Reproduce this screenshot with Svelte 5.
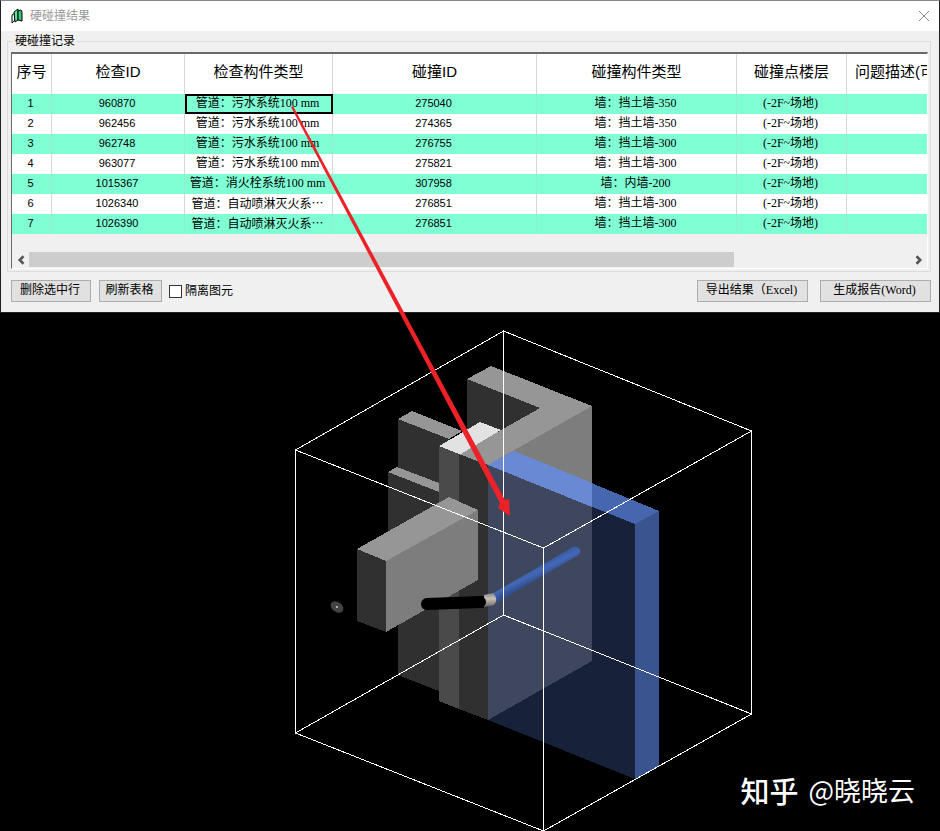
<script lang="ts">
  interface Clash {
    checkId: string;
    checkType: string;
    clashId: string;
    clashType: string;
    floor: string;
  }

  const columns = [
    { title: '序号', width: 40 },
    { title: '检查ID', width: 133 },
    { title: '检查构件类型', width: 148 },
    { title: '碰撞ID', width: 204 },
    { title: '碰撞构件类型', width: 200 },
    { title: '碰撞点楼层', width: 110 },
    { title: '问题描述(可', width: 311 },
  ];

  const clashes: Clash[] = [
    { checkId: '960870', checkType: '管道：污水系统100 mm', clashId: '275040', clashType: '墙：挡土墙-350', floor: '(-2F~场地)' },
    { checkId: '962456', checkType: '管道：污水系统100 mm', clashId: '274365', clashType: '墙：挡土墙-350', floor: '(-2F~场地)' },
    { checkId: '962748', checkType: '管道：污水系统100 mm', clashId: '276755', clashType: '墙：挡土墙-300', floor: '(-2F~场地)' },
    { checkId: '963077', checkType: '管道：污水系统100 mm', clashId: '275821', clashType: '墙：挡土墙-300', floor: '(-2F~场地)' },
    { checkId: '1015367', checkType: '管道：消火栓系统100 mm', clashId: '307958', clashType: '墙：内墙-200', floor: '(-2F~场地)' },
    { checkId: '1026340', checkType: '管道：自动喷淋灭火系…', clashId: '276851', clashType: '墙：挡土墙-300', floor: '(-2F~场地)' },
    { checkId: '1026390', checkType: '管道：自动喷淋灭火系…', clashId: '276851', clashType: '墙：挡土墙-300', floor: '(-2F~场地)' },
  ];

  let selected = $state(0);
  let isolate = $state(false);
</script>

<div class="page">
  <section class="window">
    <header class="titlebar">
      <svg class="logo" viewBox="0 0 12 16" aria-hidden="true">
        <path d="M1 7 4 5V12L1 15Z" fill="#fff" stroke="#000" />
        <path d="M3 4 7 1V12L4 14Z" fill="#5fe39a" stroke="#000" />
        <path d="M7 3 10 2 11 4V13L7 12Z" fill="#35c978" stroke="#000" />
      </svg>
      <h1>硬碰撞结果</h1>
      <button class="close" aria-label="关闭">
        <svg viewBox="0 0 12 12" aria-hidden="true"><path d="M1 1 11 11M11 1 1 11" stroke="#888" fill="none" /></svg>
      </button>
    </header>

    <div class="body">
      <fieldset>
        <legend>硬碰撞记录</legend>
        <div class="grid">
          <div class="viewport">
            <table>
              <colgroup>
                {#each columns as col}
                  <col style="width: {col.width}px" />
                {/each}
              </colgroup>
              <thead>
                <tr>
                  {#each columns as col}
                    <th>{col.title}</th>
                  {/each}
                </tr>
              </thead>
              <tbody>
                {#each clashes as clash, i}
                  <tr onclick={() => (selected = i)}>
                    <td class="num">{i + 1}</td>
                    <td class="num">{clash.checkId}</td>
                    <td class:selected={selected === i} class:truncated={clash.checkType.endsWith('…')}>{clash.checkType}</td>
                    <td class="num">{clash.clashId}</td>
                    <td>{clash.clashType}</td>
                    <td>{clash.floor}</td>
                    <td></td>
                  </tr>
                {/each}
              </tbody>
            </table>
          </div>
          <div class="scrollbar">
            <button aria-label="向左滚动">
              <svg viewBox="0 0 8 8" aria-hidden="true"><path d="M6 1 3 4 6 7" /></svg>
            </button>
            <div class="track"><div class="thumb"></div></div>
            <button aria-label="向右滚动">
              <svg viewBox="0 0 8 8" aria-hidden="true"><path d="M2 1 5 4 2 7" /></svg>
            </button>
          </div>
        </div>
      </fieldset>

      <div class="actions">
        <button class="btn delete">删除选中行</button>
        <button class="btn refresh">刷新表格</button>
        <label><input type="checkbox" bind:checked={isolate} />隔离图元</label>
        <button class="btn export">导出结果（Excel)</button>
        <button class="btn report">生成报告(Word)</button>
      </div>
    </div>
  </section>

  <main class="scene">
    <svg viewBox="0 313 940 518" role="img" aria-label="碰撞点三维视图">
      <defs>
        <linearGradient id="pipe" gradientUnits="userSpaceOnUse" x1="531" y1="570" x2="536" y2="580">
          <stop offset="0" stop-color="#3a5da6" />
          <stop offset="0.4" stop-color="#4469b8" />
          <stop offset="1" stop-color="#32508f" />
        </linearGradient>
        <linearGradient id="joint" x1="0" y1="0" x2="0" y2="1">
          <stop offset="0" stop-color="#8a8680" />
          <stop offset="0.4" stop-color="#c4c0b8" />
          <stop offset="1" stop-color="#6c6862" />
        </linearGradient>
      </defs>

      <!-- walls behind -->
      <g shape-rendering="crispEdges">
        <polygon points="398,419 449,439 449,695 398,675" fill="#303030" />
        <polygon points="398,419 412,411 462,431 449,439" fill="#969696" />
        <polygon points="388,472 439,492 439,600 388,600" fill="#303030" />
        <polygon points="388,472 397,467 439,483 439,492" fill="#969696" />
        <polygon points="467,379 540,408 500,432 467,432" fill="#303030" />
        <polygon points="592,406 592,661 488,720 488,465" fill="#7d7d7d" />
        <polygon points="467,379 491,366 592,406 488,465 459,454 540,408" fill="#969696" />
        <polygon points="439,446 480,422 501,430 459,455" fill="#e2e2e2" />
        <polygon points="439,446 459,454 459,709 439,701" fill="#4a4a4a" />
        <polygon points="459,454 488,465 488,720 459,709" fill="#303030" />
      </g>

      <!-- clashing wall -->
      <g shape-rendering="crispEdges">
        <polygon points="488,465 635,524 635,779 488,720" fill="#18213a" />
        <polygon points="488,465 592,507 592,661 488,720" fill="#3e475e" />
        <polygon points="514,451 659,511 635,524 488,465" fill="#4666b0" />
        <polygon points="514,451 592,483 592,507 488,465" fill="#6989d4" />
        <polygon points="635,524 659,511 659,766 635,779" fill="#3a548f" />
      </g>

      <!-- front block -->
      <g shape-rendering="crispEdges">
        <polygon points="357,549 386,561 386,632 357,621" fill="#303030" />
        <polygon points="386,561 478,510 478,580 386,632" fill="#7d7d7d" />
        <polygon points="357,549 449,497 478,510 386,561" fill="#969696" />
      </g>

      <!-- pipe -->
      <path d="M490 595 573 547Q578 545 580 550 581 554 577 556L496 603Z" fill="url(#pipe)" />
      <path d="M484 595 493 593Q499 599 494 605L484 607Z" fill="url(#joint)" />
      <path d="M427 604 480 602" stroke="#000" stroke-width="12" stroke-linecap="round" />
      <path d="M476 596H484V608H476Z" fill="#000" />
      <ellipse cx="337" cy="607" rx="7" ry="5" fill="#444" transform="rotate(35 337 607)" />
      <circle cx="337" cy="607" r="1" fill="#d8d4b0" />

      <!-- section box -->
      <g fill="none" stroke="#fff" shape-rendering="crispEdges">
        <path d="M503.5 331 295.5 450 543.5 548 751.5 431Z" />
        <path d="M503.5 615 295.5 733 543.5 831 751.5 714Z" />
        <path d="M503.5 331V615M295.5 450V733M543.5 548V831M751.5 431V714" />
      </g>
    </svg>
    <p class="watermark"><strong>知乎</strong><span>@晓晓云</span></p>
  </main>

  <svg class="pointer" viewBox="0 0 940 831" aria-hidden="true">
    <path d="M291 107 293 106 505 500 509 499 510 516 498 508 500 503Z" fill="#ed2228" />
  </svg>
</div>

<style>
  :global(body) {
    margin: 0;
    background: #000;
  }
  .page {
    position: relative;
    overflow: hidden;
    font-family: 'Liberation Serif', 'Noto Sans CJK SC', sans-serif;
    font-size: 12px;
    line-height: 16px;
    color: #000;
  }
  button {
    font: inherit;
    color: inherit;
  }
  .window {
    background: #f0f0f0;
    border: 1px solid #222;
    border-top-color: #888;
  }
  .titlebar {
    display: flex;
    align-items: center;
    height: 30px;
    padding: 0 9px 0 10px;
    background: #fff;
  }
  .logo {
    width: 12px;
    height: 16px;
    margin-right: 7px;
  }
  h1 {
    flex: 1;
    margin: 0;
    font-size: 12px;
    font-weight: 400;
    color: #999;
  }
  .close {
    display: flex;
    padding: 0;
    border: 0;
    background: none;
  }
  .close svg {
    width: 12px;
    height: 12px;
  }
  .body {
    padding: 2px 8px 10px 6px;
  }
  fieldset {
    min-width: 0;
    margin: 0;
    padding: 3px 2px 2px 3px;
    border: 1px solid #dcdcdc;
  }
  legend {
    margin-left: 2px;
    padding: 0 2px;
  }
  .grid {
    border: 1px solid #fff;
    border-top: 2px solid #696969;
    border-left: 1px solid #696969;
  }
  .viewport {
    overflow: hidden;
    padding-bottom: 17px;
  }
  table {
    width: 1146px;
    table-layout: fixed;
    border-collapse: separate;
    border-spacing: 0;
    background: #fff;
  }
  th,
  td {
    box-sizing: border-box;
    border-right: 1px solid #d8d8d8;
    text-align: center;
    white-space: nowrap;
    overflow: hidden;
  }
  th {
    height: 40px;
    padding: 0 0 4px;
    font-family: 'Liberation Sans', 'Noto Sans CJK SC', sans-serif;
    font-size: 15px;
    font-weight: 400;
  }
  th:last-child {
    padding-left: 8px;
    text-align: left;
  }
  td {
    height: 20px;
    padding: 0 2px 2px 0;
  }
  .num {
    padding: 0 2px 2px 0;
    font-family: 'Liberation Sans', sans-serif;
    font-size: 11px;
  }
  .truncated {
    font-family: 'Noto Sans CJK SC', sans-serif;
  }
  tbody tr:nth-child(odd) {
    background: #80ffd4;
  }
  tbody tr:nth-child(odd) td {
    border-right-color: #98eccc;
  }
  .selected {
    outline: 2px solid #000;
    outline-offset: -2px;
  }
  .scrollbar {
    display: flex;
    height: 17px;
  }
  .scrollbar button {
    display: flex;
    align-items: center;
    justify-content: center;
    width: 17px;
    padding: 0;
    border: 0;
    background: none;
  }
  .scrollbar svg {
    width: 10px;
    height: 10px;
  }
  .scrollbar path {
    fill: none;
    stroke: #555;
    stroke-width: 2;
  }
  .track {
    flex: 1;
    padding: 1px 0;
  }
  .thumb {
    width: 80%;
    height: 15px;
    background: #cdcdcd;
  }
  .actions {
    display: flex;
    align-items: center;
    padding: 8px 0 0 4px;
  }
  .btn {
    box-sizing: border-box;
    height: 22px;
    padding: 0 2px 2px 0;
    border: 1px solid #adadad;
    background: #e1e1e1;
  }
  .delete {
    width: 80px;
    margin-right: 8px;
  }
  .refresh {
    width: 63px;
    margin-right: 7px;
  }
  .export {
    width: 111px;
    margin-left: auto;
    margin-right: 12px;
  }
  .report {
    width: 111px;
  }
  label {
    display: flex;
    align-items: center;
    gap: 3px;
  }
  input {
    appearance: none;
    box-sizing: border-box;
    width: 13px;
    height: 13px;
    margin: 0;
    border: 1px solid #333;
    background: #fff;
  }
  input:checked {
    background: #333;
  }
  .scene {
    position: relative;
    background: #000;
  }
  .scene svg {
    display: block;
    width: 100%;
  }
  .watermark {
    display: flex;
    align-items: center;
    gap: 10px;
    position: absolute;
    right: 25px;
    bottom: 21px;
    margin: 0;
    font-family: 'Noto Sans CJK SC', sans-serif;
    font-size: 27px;
    line-height: 40px;
    color: #fff;
  }
  .watermark strong {
    font-size: 29px;
    font-weight: 500;
  }
  .pointer {
    position: absolute;
    top: 0;
    left: 0;
    width: 100%;
    pointer-events: none;
  }
</style>
